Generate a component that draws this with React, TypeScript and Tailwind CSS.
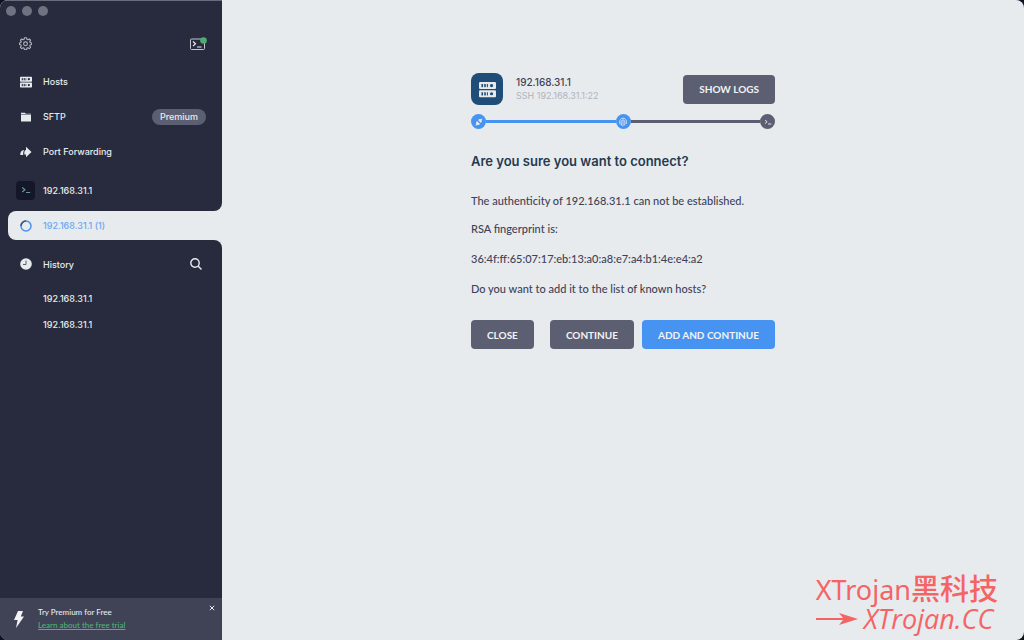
import type { ReactNode } from "react";
import { clsx } from "clsx";

interface NavItemProps {
  icon: ReactNode;
  label: string;
  className?: string;
  children?: ReactNode;
}

function ServerIcon({ className }: { className?: string }) {
  return (
    <svg viewBox="0 0 16 16" className={className} aria-hidden="true">
      <rect x="0" y="1" width="16" height="6.5" rx="1" fill="#e7ebee" />
      <rect x="0" y="8.8" width="16" height="6.5" rx="1" fill="#e7ebee" />
      <g className="fill-current">
        <rect x="2.3" y="2.8" width="1.5" height="3" />
        <rect x="4.9" y="2.8" width="1.5" height="3" />
        <rect x="7.4" y="2.8" width="1" height="3" />
        <circle cx="11.8" cy="4.3" r="1.5" />
        <rect x="2.3" y="10.6" width="1.5" height="3" />
        <rect x="4.9" y="10.6" width="1.5" height="3" />
        <rect x="7.4" y="10.6" width="1" height="3" />
        <circle cx="11.8" cy="12" r="1.5" />
      </g>
    </svg>
  );
}

function GearIcon() {
  return (
    <svg viewBox="0 0 24 24" className="size-[13px]" fill="none" stroke="#b3b6c1" strokeWidth="2" strokeLinejoin="round" aria-hidden="true">
      <path d="M10 1.5h4l.7 3 1.7.7 2.6-1.6 2.4 2.4-1.6 2.6.7 1.7 3 .7v3l-3 .7-.7 1.7 1.6 2.6-2.4 2.4-2.6-1.6-1.7.7-.7 3h-4l-.7-3-1.7-.7L5 21.4l-2.4-2.4 1.6-2.6-.7-1.7-2.5-.7v-3l2.5-.7.7-1.7L2.6 6 5 3.6l2.6 1.6 1.7-.7z" />
      <circle cx="12" cy="12.5" r="3.5" />
    </svg>
  );
}

function TerminalIcon() {
  return (
    <svg viewBox="0 0 18 14" className="h-[14px] w-[18px]" fill="none" aria-hidden="true">
      <rect x="1.5" y="2" width="14" height="10.5" rx="1" stroke="#c3c6cf" />
      <path d="M4 4.5l2.5 2.3L4 9.1M8 10h4.5" stroke="#e7ebee" strokeWidth="1.2" />
      <circle cx="14.5" cy="3.5" r="3.3" fill="#4cae72" />
    </svg>
  );
}

function PromptIcon({ className }: { className?: string }) {
  return (
    <svg viewBox="0 0 12 12" className={className} fill="none" stroke="currentColor" strokeWidth="1.4" aria-hidden="true">
      <path d="M1.5 3l3.2 2.7L1.5 8.4M6 9h5" />
    </svg>
  );
}

function FolderIcon() {
  return (
    <svg viewBox="0 0 12 12" className="size-3" fill="#e7ebee" aria-hidden="true">
      <path d="M1 1.7h4l.8 1H11v.8H1z" />
      <path d="M1 4h10v6.5H1z" />
    </svg>
  );
}

function ForwardIcon() {
  return (
    <svg viewBox="0 0 12 12" className="size-3" fill="#e7ebee" aria-hidden="true">
      <path d="M6 .8L11.5 6 6 11.2V8.5H4.3v-1C4.3 5.2 4.8 4 6 4z" />
      <path d="M.3 9c0-3.2.9-4.7 3.8-5C3.4 5.3 3.1 6.5 3.2 9z" />
    </svg>
  );
}

function SpinnerIcon() {
  return (
    <svg viewBox="0 0 12 12" className="size-3" fill="none" strokeWidth="1.5" aria-hidden="true">
      <circle cx="6" cy="6" r="5" stroke="#4793f1" />
      <path d="M1 6a5 5 0 0 1 5-5" stroke="#4a4d60" />
    </svg>
  );
}

function ClockIcon() {
  return (
    <svg viewBox="0 0 12 12" className="size-3" aria-hidden="true">
      <circle cx="6" cy="6" r="5.8" fill="#e7ebee" />
      <path d="M6 2.5V6.5H3" fill="none" stroke="#5b5e70" />
    </svg>
  );
}

function SearchIcon() {
  return (
    <svg viewBox="0 0 12 12" className="size-3" fill="none" stroke="#e7ebee" strokeWidth="1.4" aria-hidden="true">
      <circle cx="5" cy="5" r="4.2" />
      <path d="M8 8l3.5 3.5" />
    </svg>
  );
}

function BoltIcon() {
  return (
    <svg viewBox="0 0 10 17" className="h-[17px] w-[10px]" fill="#f1f3f5" aria-hidden="true">
      <path d="M4 0h5L6.8 5.5H10L2 17l1.6-8H0z" />
    </svg>
  );
}

function PlugIcon() {
  return (
    <svg viewBox="0 0 14 14" className="size-[14px]" fill="#e7ebee" aria-hidden="true">
      <path d="M5 5.9L8.1 9 7 9.8c-1 .5-1.6.3-2 .1l-.9.9-.7-.7.9-.9C3.9 8.5 3.9 7.6 4.3 6.9zM6.1 5C7 4 8.2 3.9 8.9 4.3l.9-.9.7.7-.9.9c.4.7.3 1.9-.7 2.9z" />
    </svg>
  );
}

function FingerprintIcon() {
  return (
    <svg viewBox="0 0 14 14" className="size-[14px]" fill="none" stroke="#cfe2f8" strokeWidth="1" strokeLinecap="round" aria-hidden="true">
      <path d="M4 9C3 5.5 4.5 3.2 7 3.2s4 2 3.4 5.3M5.5 10C4.6 7 5.2 4.9 7 4.9S9.3 7 8.7 10M7 6.6c.3 1.5.2 2.8-.1 4.3" />
    </svg>
  );
}

function NavItem({ icon, label, className, children }: NavItemProps) {
  return (
    <div className={clsx("flex items-center justify-between pl-4 pr-4", className)}>
      <button type="button" className="flex items-center gap-2">
        <span className="flex size-[19px] items-center justify-center">{icon}</span>
        <span>{label}</span>
      </button>
      {children}
    </div>
  );
}

function Sidebar() {
  return (
    <aside className="flex w-[222px] shrink-0 flex-col text-[9px] font-medium leading-[21px] text-[#e7ebee]">
      <nav className="rounded-br-lg border-t border-[#696c7c] bg-[#282b3d]">
        <div className="flex h-5 items-center gap-1.5 pl-1.5">
          <span className="size-2.5 rounded-full bg-[#6f7280]" />
          <span className="size-2.5 rounded-full bg-[#6f7280]" />
          <span className="size-2.5 rounded-full bg-[#6f7280]" />
        </div>
        <div className="flex h-[43px] items-center justify-between pt-0.5 pl-[19px] pr-[15px]">
          <button type="button" aria-label="Settings">
            <GearIcon />
          </button>
          <button type="button" aria-label="New terminal">
            <TerminalIcon />
          </button>
        </div>
        <NavItem className="h-[35px]" icon={<ServerIcon className="size-3 text-[#282b3d]" />} label="Hosts" />
        <NavItem className="h-[35px]" icon={<FolderIcon />} label="SFTP">
          <span className="rounded-full bg-[#5c5f72] px-2 leading-4">Premium</span>
        </NavItem>
        <NavItem className="h-[35px]" icon={<ForwardIcon />} label="Port Forwarding" />
        <NavItem
          className="h-[42px]"
          icon={
            <span className="flex size-[19px] items-center justify-center rounded bg-[#141727] text-[#6d949c]">
              <PromptIcon className="size-2.5" />
            </span>
          }
          label="192.168.31.1"
        />
      </nav>

      <div className="bg-linear-to-r from-[#282b3d] from-50% to-[#e7ebee] to-50% pl-2">
        <button
          type="button"
          className="flex h-[29px] w-full items-center gap-2 rounded-l-lg bg-[#e7ebee] pl-2 text-[#6aa7f2]"
        >
          <span className="flex size-[19px] items-center justify-center">
            <SpinnerIcon />
          </span>
          192.168.31.1 (1)
        </button>
      </div>

      <div className="flex flex-1 flex-col rounded-tr-lg bg-[#282b3d]">
        <NavItem className="h-12" icon={<ClockIcon />} label="History">
          <button type="button" aria-label="Search history" className="mr-1">
            <SearchIcon />
          </button>
        </NavItem>
        <ul className="flex flex-col gap-[5px] pl-[43px]">
          <li>192.168.31.1</li>
          <li>192.168.31.1</li>
        </ul>
        <footer className="mt-auto flex h-[42px] items-center gap-[14px] bg-[#404356] pl-[14px] pr-1.5 font-['Lato','Liberation_Sans',sans-serif] text-[8px] leading-[13px]">
          <BoltIcon />
          <div>
            <p>Try Premium for Free</p>
            <a href="#trial" className="text-[#4cb378] underline">
              Learn about the free trial
            </a>
          </div>
          <button type="button" aria-label="Dismiss" className="mt-1.5 ml-auto flex size-2 items-center justify-center self-start">
            <svg viewBox="0 0 6 6" className="size-1.5" stroke="#e7ebee" aria-hidden="true">
              <path d="M.8.8l4.400 4.400M5.200.8L.8 5.200" />
            </svg>
          </button>
        </footer>
      </div>
    </aside>
  );
}

function Step({ className, children }: { className: string; children: ReactNode }) {
  return (
    <span className={clsx("flex size-[15px] items-center justify-center rounded-full", className)}>{children}</span>
  );
}

function ActionButton({ label, className }: { label: string; className?: string }) {
  return (
    <button
      type="button"
      className={clsx(
        "h-[29px] rounded px-4 font-['Lato','Liberation_Sans',sans-serif] text-[10px] font-bold text-[#f1f3f5]",
        className,
      )}
    >
      {label}
    </button>
  );
}

function ConnectPrompt() {
  return (
    <section className="w-[304px] text-[10px] leading-4 text-[#3f4257]">
      <header className="flex items-center">
        <span className="flex size-8 items-center justify-center rounded-lg bg-[#204d77]">
          <ServerIcon className="size-[17px] text-[#204d77]" />
        </span>
        <div className="ml-[13px] leading-[13px]">
          <p className="font-medium">192.168.31.1</p>
          <p className="text-[9px] text-[#b0b4bd]">SSH 192.168.31.1:22</p>
        </div>
        <ActionButton label="SHOW LOGS" className="ml-auto bg-[#5c5f72]" />
      </header>

      <div className="mt-[9px] flex items-center">
        <Step className="bg-[#4793f1]">
          <PlugIcon />
        </Step>
        <span className="h-[3px] flex-1 bg-[#4793f1]" />
        <Step className="bg-[#4793f1]">
          <FingerprintIcon />
        </Step>
        <span className="h-[3px] flex-1 bg-[#5c5f72]" />
        <Step className="bg-[#5c5f72] text-[#e7ebee]">
          <PromptIcon className="size-2" />
        </Step>
      </div>

      <h1 className="mt-6 text-[13px] leading-4 font-semibold text-[#253a50]">Are you sure you want to connect?</h1>
      <div className="mt-6 font-['Lato','Liberation_Sans',sans-serif] text-[11px] font-medium">
        <p>The authenticity of 192.168.31.1 can not be established.</p>
        <p className="mt-3">RSA fingerprint is:</p>
        <p className="mt-3.5">36:4f:ff:65:07:17:eb:13:a0:a8:e7:a4:b1:4e:e4:a2</p>
        <p className="mt-3.5">Do you want to add it to the list of known hosts?</p>
      </div>

      <div className="mt-[23px] flex items-center">
        <ActionButton label="CLOSE" className="bg-[#5c5f72]" />
        <ActionButton label="CONTINUE" className="ml-auto bg-[#5c5f72]" />
        <ActionButton label="ADD AND CONTINUE" className="ml-2 bg-[#4793f1]" />
      </div>
    </section>
  );
}

function Watermark() {
  return (
    <div className="absolute right-[26px] bottom-[7px] text-[#f56464]">
      <p className="font-['Noto_Sans','Noto_Sans_CJK_SC',sans-serif] text-[27px] leading-[30px]">
        XTrojan<span className="text-[29px] font-medium">黑科技</span>
      </p>
      <p className="flex items-center gap-1.5 font-['Open_Sans','Noto_Sans',sans-serif] text-[27px] leading-7 font-medium italic">
        <svg viewBox="0 0 42 14" className="h-[14px] w-[42px]" fill="currentColor" aria-hidden="true">
          <path d="M0 6h27L23 1l19 6-19 6 4-5H0z" />
        </svg>
        XTrojan.CC
      </p>
    </div>
  );
}

export default function App() {
  return (
    <div className="min-h-screen bg-[#0d1020]">
      <div className="relative flex min-h-screen overflow-hidden rounded-lg bg-[#e7ebee] font-['Inter','Liberation_Sans',sans-serif]">
        <Sidebar />
        <main className="flex flex-1 justify-center pt-[73px]">
          <ConnectPrompt />
        </main>
        <Watermark />
      </div>
    </div>
  );
}
